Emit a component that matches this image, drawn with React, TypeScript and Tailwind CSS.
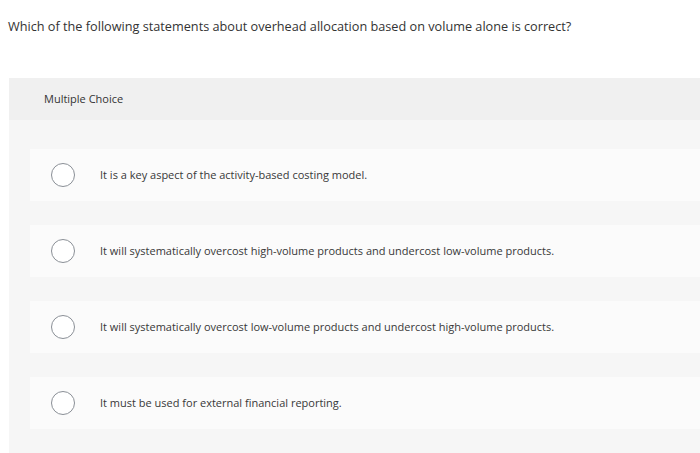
const options = [
  'It is a key aspect of the activity-based costing model.',
  'It will systematically overcost high-volume products and undercost low-volume products.',
  'It will systematically overcost low-volume products and undercost high-volume products.',
  'It must be used for external financial reporting.',
];

export default function App() {
  return (
    <div className="w-[700px] h-[453px] overflow-hidden bg-white font-['Open_Sans',sans-serif] text-[#333]">
      {/* Question */}
      <div className="pl-[8px] pt-[16px] h-[78px] text-[12.7px] leading-[20px]">
        Which of the following statements about overhead allocation based on volume alone is correct?
      </div>

      {/* Answer panel */}
      <div className="ml-[9px] h-[375px] bg-[#f6f6f6]">
        <div className="h-[42px] bg-[#f0f0f0] pl-[35px] pt-[13px] text-[11px] leading-[16px]">
          Multiple Choice
        </div>
        <div className="flex flex-col gap-[24px] pl-[21px] pt-[29px]">
          {options.map((text) => (
            <div key={text} className="flex h-[52px] items-center bg-[#fbfbfb]">
              <span className="ml-[21px] h-[24px] w-[24px] shrink-0 rounded-full border-[1.5px] border-[#8a8f96] bg-white" />
              <span className="ml-[25px] text-[11px] leading-[16px] text-[#383838]">{text}</span>
            </div>
          ))}
        </div>
      </div>
    </div>
  );
}
